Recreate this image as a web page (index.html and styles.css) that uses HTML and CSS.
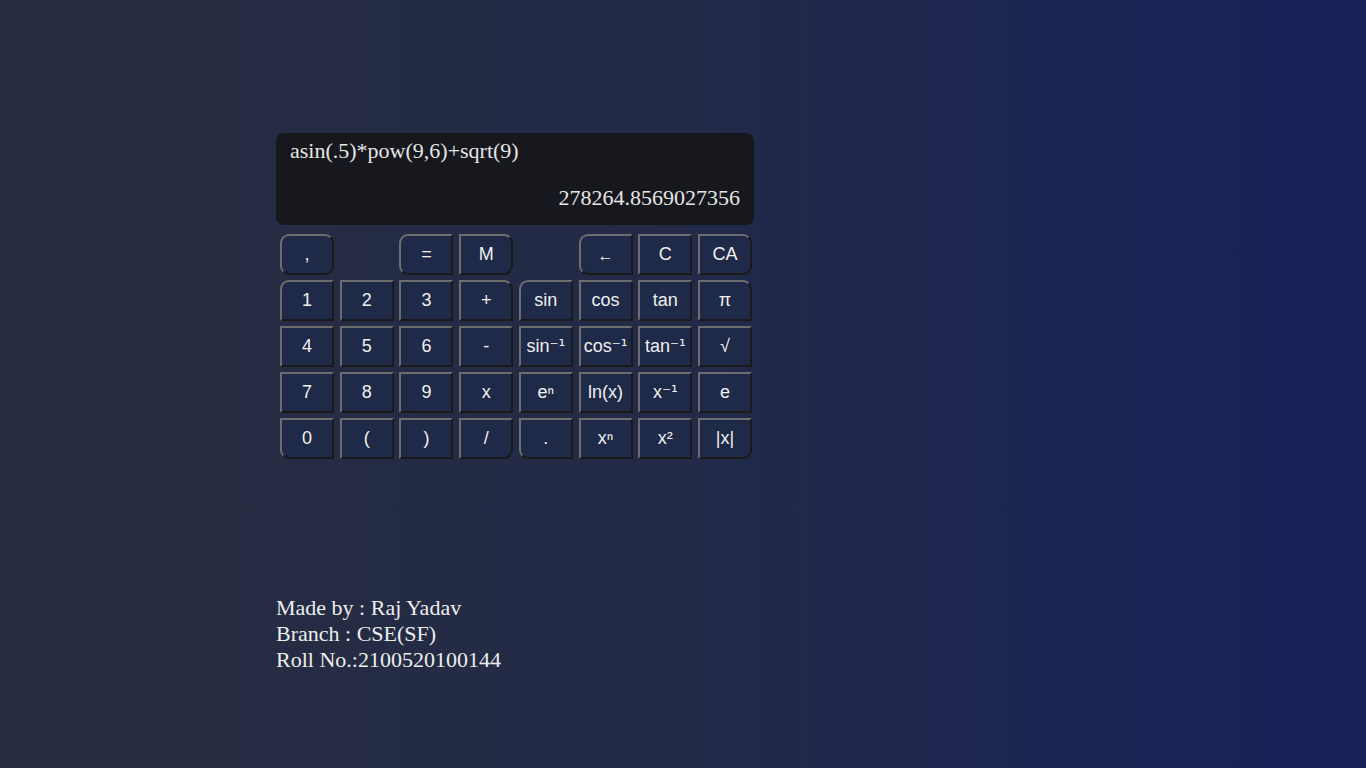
FILE: index.html
```html
<!DOCTYPE html>
<html>
<head>
<meta charset="utf-8">
<link rel="stylesheet" href="styles.css">
<title>Calculator</title>
</head>
<body>
<div class="page">
  <div class="calc">
    <div class="display">
      <div class="expr">asin(.5)*pow(9,6)+sqrt(9)</div>
      <div class="result">278264.8569027356</div>
    </div>
    <div class="keys">
      <button class="k r-all">,</button>
      <span class="blank"></span>
      <button class="k r-l">=</button>
      <button class="k r-r">M</button>
      <span class="blank"></span>
      <button class="k r-l arrow">←</button>
      <button class="k">C</button>
      <button class="k r-r">CA</button>

      <button class="k r-tl">1</button>
      <button class="k">2</button>
      <button class="k">3</button>
      <button class="k r-tr">+</button>
      <button class="k r-tl">sin</button>
      <button class="k">cos</button>
      <button class="k">tan</button>
      <button class="k r-tr">π</button>

      <button class="k">4</button>
      <button class="k">5</button>
      <button class="k">6</button>
      <button class="k">-</button>
      <button class="k">sin<span class="sup">⁻¹</span></button>
      <button class="k">cos<span class="sup">⁻¹</span></button>
      <button class="k">tan<span class="sup">⁻¹</span></button>
      <button class="k">√</button>

      <button class="k">7</button>
      <button class="k">8</button>
      <button class="k">9</button>
      <button class="k">x</button>
      <button class="k">eⁿ</button>
      <button class="k">ln(x)</button>
      <button class="k">x<span class="sup">⁻¹</span></button>
      <button class="k">e</button>

      <button class="k r-bl">0</button>
      <button class="k">(</button>
      <button class="k">)</button>
      <button class="k r-br">/</button>
      <button class="k r-bl">.</button>
      <button class="k">xⁿ</button>
      <button class="k">x²</button>
      <button class="k r-br">|x|</button>
    </div>
  </div>
  <div class="credits">
    <div>Made by : Raj Yadav</div>
    <div>Branch : CSE(SF)</div>
    <div>Roll No.:2100520100144</div>
  </div>
</div>
</body>
</html>
```
FILE: styles.css
```css
html {
  background: linear-gradient(to right, #272d3f 0%, #222a48 50%, #17215a 100%);
  min-height: 100%;
}
body {
  margin: 0;
  font-family: "Liberation Serif", serif;
  color: #eeeeee;
}
.page {
  width: 1380px;
  min-height: 790px;
  padding: 133px 0 0 276px;
  box-sizing: border-box;
}
.calc {
  width: 478px;
}
.display {
  background: #17181d;
  border-radius: 8px;
  height: 92px;
  box-sizing: border-box;
  padding: 5px 14px 0 14px;
  display: flex;
  flex-direction: column;
}
.expr {
  font-size: 22px;
  line-height: 26px;
  color: #e6e6e6;
}
.result {
  font-size: 22px;
  line-height: 26px;
  text-align: right;
  margin-top: 21px;
  color: #e6e6e6;
}
.keys {
  margin: 9px 0 0 4px;
  display: grid;
  grid-template-columns: repeat(8, 54px);
  grid-auto-rows: 41px;
  column-gap: 5.72px;
  row-gap: 5px;
}
.keys .k:nth-child(-n+8) {
  margin-bottom: 1px;
}
.k {
  margin: 0;
  padding: 0;
  background: #1f2948;
  color: #f0f0f0;
  font-family: "Liberation Sans", Arial, sans-serif;
  font-size: 18px;
  border-width: 2px;
  border-style: solid;
  border-color: #6d6d6d #1a1a1a #1a1a1a #6d6d6d;
  border-radius: 0;
  box-sizing: border-box;
  width: 54px;
  height: 41px;
  white-space: nowrap;
  overflow: visible;
  cursor: pointer;
}
.sup {
  font-family: "DejaVu Sans", sans-serif;
  font-size: 17px;
  line-height: 0;
}
.arrow { font-size: 16px; padding-top: 3px; }
.r-all { border-radius: 9px; }
.r-l { border-radius: 9px 0 0 9px; }
.r-r { border-radius: 0 9px 9px 0; }
.r-tl { border-top-left-radius: 9px; }
.r-tr { border-top-right-radius: 9px; }
.r-bl { border-bottom-left-radius: 9px; }
.r-br { border-bottom-right-radius: 9px; }
.credits {
  margin-top: 136px;
  font-size: 22px;
  line-height: 26px;
  color: #eeeeee;
}
```
